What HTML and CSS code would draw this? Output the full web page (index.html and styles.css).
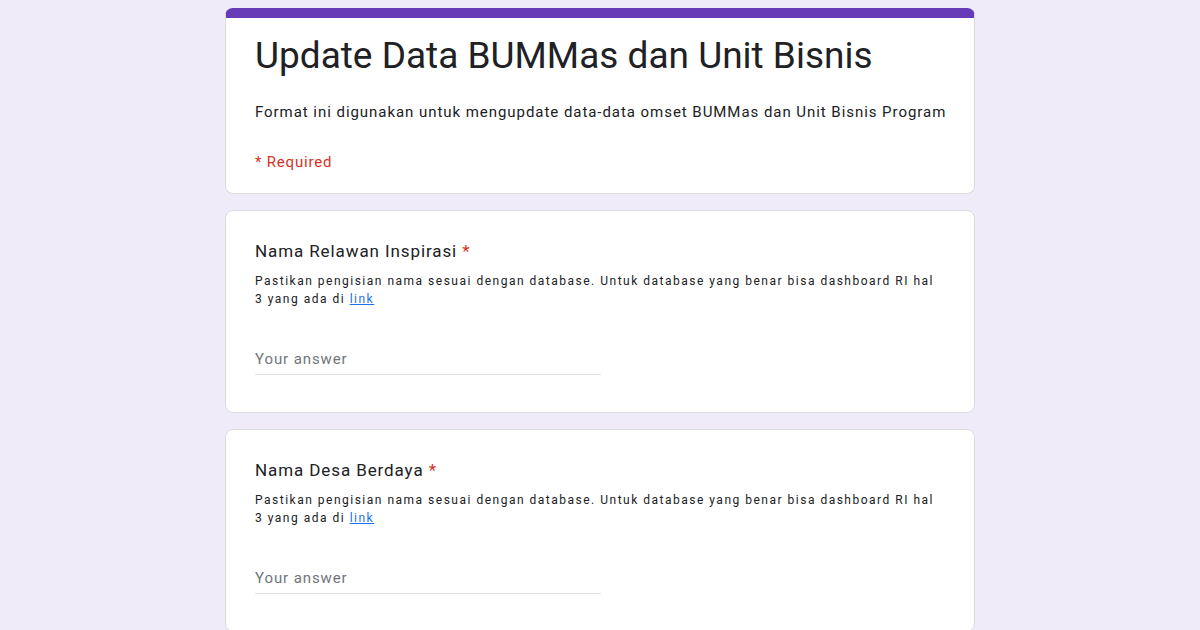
FILE: index.html
```html
<!DOCTYPE html>
<html lang="id">
<head>
  <meta charset="UTF-8" />
  <title>Update Data BUMMas dan Unit Bisnis</title>
  <meta name="viewport" content="width=device-width, initial-scale=1.0" />
  <link rel="stylesheet" href="styles.css">
</head>
<body>
  <div class="form">
    <div class="card header">
      <h1 class="title">Update Data BUMMas dan Unit Bisnis</h1>
      <p class="desc">Format ini digunakan untuk mengupdate data-data omset BUMMas dan Unit Bisnis Program</p>
      <div class="required">* Required</div>
    </div>

    <div class="card question">
      <div class="q-title">Nama Relawan Inspirasi <span class="star">*</span></div>
      <div class="q-help">Pastikan pengisian nama sesuai dengan database. Untuk database yang benar bisa dashboard RI hal 3 yang ada di <a href="#">link</a></div>
      <input class="answer" type="text" placeholder="Your answer">
    </div>

    <div class="card question">
      <div class="q-title">Nama Desa Berdaya <span class="star">*</span></div>
      <div class="q-help">Pastikan pengisian nama sesuai dengan database. Untuk database yang benar bisa dashboard RI hal 3 yang ada di <a href="#">link</a></div>
      <input class="answer" type="text" placeholder="Your answer">
    </div>
  </div>
</body>
</html>
```

FILE: styles.css
```css
body {
  margin: 0;
  background: #f0ebf8;
  font-family: Roboto, "Liberation Sans", sans-serif;
  color: #202124;
}
.form {
  width: 750px;
  margin: 8px auto 0;
  display: flex;
  flex-direction: column;
  gap: 16px;
}
.card {
  background: #fff;
  border: 1px solid #dadce0;
  border-radius: 8px;
  padding: 0 28px 0 29px;
}
.header {
  border-top: 10px solid #673ab7;
  padding-top: 14px;
  padding-bottom: 20px;
}
.title {
  margin: 0;
  font-size: 37px;
  font-weight: 400;
  line-height: 48px;
  color: #202124;
}
.desc {
  margin: 21px 0 0;
  font-size: 15px;
  line-height: 22px;
  letter-spacing: 0.95px;
  white-space: nowrap;
}
.required {
  margin-top: 28px;
  font-size: 15px;
  line-height: 22px;
  letter-spacing: 0.8px;
  color: #d93025;
}
.question {
  padding-top: 28px;
  padding-bottom: 37px;
}
.q-title {
  font-size: 17px;
  line-height: 24px;
  letter-spacing: 0.9px;
}
.star {
  color: #d93025;
}
.q-help {
  margin-top: 9px;
  font-size: 12px;
  line-height: 18px;
  letter-spacing: 1.5px;
}
.q-help a {
  color: #1a73e8;
}
.answer {
  display: block;
  width: 50%;
  margin-top: 38px;
  padding: 4px 0 6px;
  border: none;
  border-bottom: 1px solid #e0e0e0;
  font-family: inherit;
  font-size: 15px;
  letter-spacing: 0.9px;
  color: #202124;
  outline: none;
}
.answer::placeholder {
  color: #70757a;
}
```
